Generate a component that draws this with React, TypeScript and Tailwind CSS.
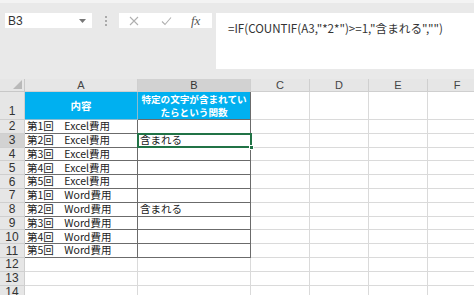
import React from 'react';

const colW = [113, 113, 59, 59, 59, 59];
const letters = ['A', 'B', 'C', 'D', 'E', 'F'];

const rows: { n: number; a: string; b: string }[] = [
    { n: 2, a: '第1回　Excel費用', b: '' },
    { n: 3, a: '第2回　Excel費用', b: '含まれる' },
    { n: 4, a: '第3回　Excel費用', b: '' },
    { n: 5, a: '第4回　Excel費用', b: '' },
    { n: 6, a: '第5回　Excel費用', b: '' },
    { n: 7, a: '第1回　Word費用', b: '' },
    { n: 8, a: '第2回　Word費用', b: '含まれる' },
    { n: 9, a: '第3回　Word費用', b: '' },
    { n: 10, a: '第4回　Word費用', b: '' },
    { n: 11, a: '第5回　Word費用', b: '' },
    { n: 12, a: '', b: '' },
    { n: 13, a: '', b: '' },
    { n: 14, a: '', b: '' },
];

const font = { fontFamily: '"Noto Sans CJK JP", "Liberation Sans", sans-serif' };
const latin = { fontFamily: '"Liberation Sans", Arial, sans-serif' };

export default function App() {
    return (
        <div className="w-[474px] h-[295px] overflow-hidden bg-[#e9e9e9] text-[#222]" style={font}>
            {/* Formula bar */}
            <div className="h-[79px] border-t-[3px] border-[#f3f3f3] pt-[10px] flex items-start">
                <div className="ml-[5px] w-[87px] h-[15px] bg-white flex items-center justify-between px-[3px]">
                    <span className="text-[12px] leading-none text-[#333]" style={latin}>B3</span>
                    <svg width="7" height="4" viewBox="0 0 7 4" className="mr-[3px]">
                        <path d="M0 0 L7 0 L3.5 4 Z" fill="#777" />
                    </svg>
                </div>
                <div className="w-[27px] h-[15px] flex flex-col items-center justify-center gap-[2px]">
                    <div className="w-[2px] h-[2px] bg-[#aaa]" />
                    <div className="w-[2px] h-[2px] bg-[#aaa]" />
                    <div className="w-[2px] h-[2px] bg-[#aaa]" />
                </div>
                <div className="w-[93px] h-[15px] bg-white flex items-center">
                    <svg width="10" height="10" viewBox="0 0 10 10" className="ml-[10px]">
                        <path d="M1 1 L9 9 M9 1 L1 9" stroke="#b0b0b0" strokeWidth="1.1" fill="none" />
                    </svg>
                    <svg width="11" height="10" viewBox="0 0 11 10" className="ml-[22px]">
                        <path d="M1 5.5 L4 8.5 L10 1.5" stroke="#b0b0b0" strokeWidth="1.1" fill="none" />
                    </svg>
                    <span
                        className="ml-[19px] text-[13px] italic leading-none text-[#555]"
                        style={{ fontFamily: '"Liberation Serif", serif' }}
                    >
                        fx
                    </span>
                </div>
                <div className="ml-[4px] flex-1 h-[56px] bg-white pl-[12px] pt-[1px]">
                    <span className="text-[11.6px] leading-[14px] text-[#333] whitespace-nowrap">
                        =IF(COUNTIF(A3,"*2*")&gt;=1,"含まれる","")
                    </span>
                </div>
            </div>

            {/* Sheet */}
            <div className="relative">
                {/* column headers */}
                <div className="flex h-[13px]">
                    <div className="w-[25px] shrink-0 bg-[#e6e6e6] border-r border-b border-[#c8c8c8] relative">
                        <div className="absolute right-[2px] bottom-[2px] w-0 h-0 border-l-[9px] border-l-transparent border-b-[9px] border-b-[#b9b9b9]" />
                    </div>
                    {colW.map((w, i) => (
                        <div
                            key={i}
                            style={{ width: w, ...latin }}
                            className={`shrink-0 border-r border-b border-[#cfcfcf] flex items-center justify-center text-[11px] leading-none ${
                                i === 1 ? 'bg-[#d2d2d2] text-[#333]' : 'bg-[#e6e6e6] text-[#444]'
                            }`}
                        >
                            {letters[i]}
                        </div>
                    ))}
                </div>

                {/* row 1 */}
                <div className="flex h-[28px]">
                    <div
                        className="w-[25px] shrink-0 bg-[#e6e6e6] border-r border-b border-[#cfcfcf] flex items-end justify-center text-[12px] leading-none pb-[2px] text-[#333]"
                        style={latin}
                    >
                        1
                    </div>
                    <div className="w-[113px] shrink-0 bg-[#00b0f0] border-r border-b border-[#8bbcd0] flex items-center justify-center text-white font-bold text-[10.5px]">
                        内容
                    </div>
                    <div className="w-[113px] shrink-0 bg-[#00b0f0] border-r border-b border-[#6b6b6b] flex flex-col items-center justify-center text-white font-bold text-[9.6px] leading-[13px] whitespace-nowrap">
                        <span>特定の文字が含まれてい</span>
                        <span>たらという関数</span>
                    </div>
                    {colW.slice(2).map((w, i) => (
                        <div key={i} style={{ width: w }} className="shrink-0 bg-white border-r border-b border-[#dadada]" />
                    ))}
                </div>

                {/* data rows */}
                {rows.map((r) => {
                    const table = r.n <= 11;
                    return (
                        <div key={r.n} className="flex h-[13.8px]">
                            <div
                                className={`w-[25px] shrink-0 border-r border-b border-[#cfcfcf] flex items-center justify-center text-[12px] leading-none text-[#333] ${
                                    r.n === 3 ? 'bg-[#d2d2d2]' : 'bg-[#e6e6e6]'
                                }`}
                                style={latin}
                            >
                                {r.n}
                            </div>
                            <div
                                className={`w-[113px] shrink-0 bg-white border-r border-b flex items-center pl-[2px] text-[10.5px] leading-none whitespace-nowrap ${
                                    table ? 'border-[#6b6b6b]' : 'border-[#dadada]'
                                }`}
                            >
                                {r.a}
                            </div>
                            <div
                                className={`w-[113px] shrink-0 bg-white border-r border-b flex items-center pl-[2px] text-[10.5px] leading-none whitespace-nowrap ${
                                    table ? 'border-[#6b6b6b]' : 'border-[#dadada]'
                                }`}
                            >
                                {r.b}
                            </div>
                            {colW.slice(2).map((w, i) => (
                                <div key={i} style={{ width: w }} className="shrink-0 bg-white border-r border-b border-[#dadada]" />
                            ))}
                        </div>
                    );
                })}

                {/* selection on B3 */}
                <div className="absolute left-[137px] top-[54px] w-[115px] h-[15px] border-2 border-[#217346] pointer-events-none">
                    <div className="absolute -right-[4px] -bottom-[4px] w-[5px] h-[5px] bg-[#217346] border border-white" />
                </div>
            </div>
        </div>
    );
}
